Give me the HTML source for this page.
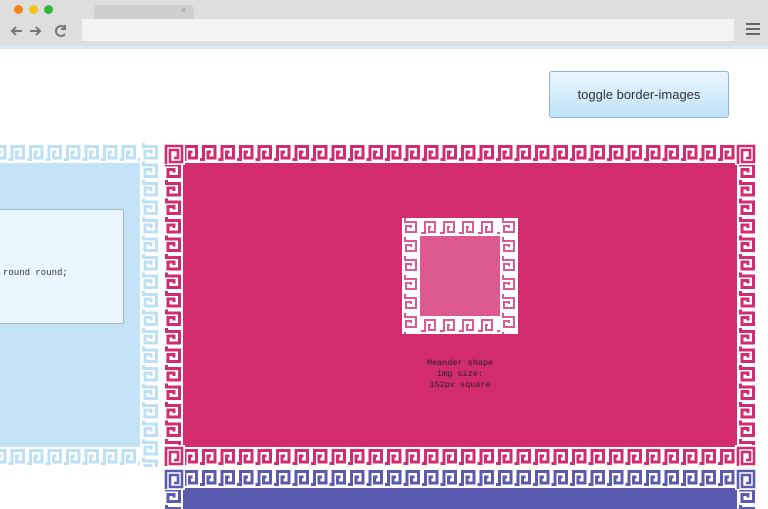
<!DOCTYPE html>
<html><head><style>
*{margin:0;padding:0;box-sizing:border-box}
body{width:768px;height:509px;overflow:hidden;background:#fff;position:relative;font-family:"Liberation Sans",sans-serif}
.abs{position:absolute}
</style></head><body>
<div class="abs" style="left:0;top:0;width:768px;height:46px;background:#dedede"></div>
<div class="abs" style="left:14px;top:5px;width:9px;height:9px;border-radius:50%;background:#f5821f"></div>
<div class="abs" style="left:29px;top:5px;width:9px;height:9px;border-radius:50%;background:#f6c31c"></div>
<div class="abs" style="left:44px;top:5px;width:9px;height:9px;border-radius:50%;background:#2fba3d"></div>
<div class="abs" style="left:94px;top:5px;width:100px;height:14px;background:#cfcfcf;border-radius:4px 4px 0 0"></div>
<div class="abs" style="left:181px;top:5px;font-size:9px;color:#888">×</div>
<svg class="abs" style="left:8px;top:22px" width="62" height="18" fill="none" stroke="#777" stroke-width="2">
<path d="M4,9 H14 M8,5 L4,9 L8,13"/>
<path d="M22,9 H32 M28,5 L32,9 L28,13"/>
<path d="M57,6 A5,5 0 1 0 57,12 M57,3 V7 H53"/>
</svg>
<div class="abs" style="left:82px;top:19px;width:652px;height:22px;background:#f3f3f3"></div>
<div class="abs" style="left:746px;top:23px;width:14px;height:2px;background:#666;box-shadow:0 5px 0 #666,0 10px 0 #666"></div>
<div class="abs" style="left:0;top:46px;width:768px;height:3px;background:#dde8f5"></div>

<div class="abs" style="left:549px;top:71px;width:180px;height:47px;border:1px solid #8fb7d2;border-radius:3px;background:linear-gradient(#eaf6fd,#bfe2f7);font-size:13px;color:#333;text-align:center;line-height:45px">toggle border-images</div>

<svg class="abs" style="left:0;top:0" width="768" height="509">
<defs>
<pattern id="mp" width="18.5" height="20" patternUnits="userSpaceOnUse">
<rect width="18.5" height="20" fill="#fff"/>
<path d="M0,16.5 H3.5 V3.5 H15 V15 H8 V9 H11" fill="none" stroke="#d22c6e" stroke-width="3"/>
</pattern>
<pattern id="mb" width="18.5" height="20" patternUnits="userSpaceOnUse">
<rect width="18.5" height="20" fill="#fff"/>
<path d="M0,16.5 H3.5 V3.5 H15 V15 H8 V9 H11" fill="none" stroke="#bde0f5" stroke-width="3"/>
</pattern>
<pattern id="mv" width="18.5" height="20" patternUnits="userSpaceOnUse">
<rect width="18.5" height="20" fill="#fff"/>
<path d="M0,16.5 H3.5 V3.5 H15 V15 H8 V9 H11" fill="none" stroke="#5a5aae" stroke-width="3"/>
</pattern>
<pattern id="mw" width="19" height="18" patternUnits="userSpaceOnUse">
<rect width="19" height="18" fill="#fff"/>
<path d="M0,15 H4 V4 H14 V14 H8 V9 H10" fill="none" stroke="#dc5a90" stroke-width="2"/>
</pattern>
<g id="corner"><rect width="22" height="22" fill="#fff" stroke="none"/><path d="M3,21 V3 H19 V19 H7 V7 H15 V15 H11" fill="none" stroke-width="2.6"/></g>
</defs>
<!-- blue box -->
<rect x="-10" y="163" width="150" height="284" fill="#c3e3f6"/>
<g transform="translate(-10,143)"><rect width="170" height="20" fill="url(#mb)"/></g>
<g transform="translate(-10,447)"><rect width="170" height="20" fill="url(#mb)"/></g>
<g transform="translate(160,143) rotate(90)"><rect width="324" height="20" fill="url(#mb)"/></g>
<!-- pink -->
<rect x="183" y="163" width="554" height="284" fill="#d22c6e"/>
<g transform="translate(163,143)"><rect width="594" height="20" fill="url(#mp)"/></g>
<g transform="translate(163,447)"><rect width="594" height="20" fill="url(#mp)"/></g>
<g transform="translate(183,143) rotate(90)"><rect width="324" height="20" fill="url(#mp)"/></g>
<g transform="translate(757,143) rotate(90)"><rect width="324" height="20" fill="url(#mp)"/></g>
<g stroke="#d22c6e">
<use href="#corner" x="163" y="143"/><use href="#corner" x="735" y="143"/>
<use href="#corner" x="163" y="445"/><use href="#corner" x="735" y="445"/>
</g>
<!-- purple -->
<rect x="183" y="488" width="554" height="40" fill="#5a5aae"/>
<g transform="translate(163,468)"><rect width="594" height="20" fill="url(#mv)"/></g>
<g transform="translate(183,468) rotate(90)"><rect width="60" height="20" fill="url(#mv)"/></g>
<g transform="translate(757,468) rotate(90)"><rect width="60" height="20" fill="url(#mv)"/></g>
<g stroke="#5a5aae"><use href="#corner" x="163" y="468"/><use href="#corner" x="735" y="468"/></g>
<!-- sample -->
<rect x="402" y="218" width="116" height="116" fill="#fff"/>
<g transform="translate(402,218)"><rect width="116" height="18" fill="url(#mw)"/></g>
<g transform="translate(402,316)"><rect width="116" height="18" fill="url(#mw)"/></g>
<g transform="translate(420,218) rotate(90)"><rect width="116" height="18" fill="url(#mw)"/></g>
<g transform="translate(518,218) rotate(90)"><rect width="116" height="18" fill="url(#mw)"/></g>
<rect x="420" y="236" width="80" height="80" fill="#dc5a90"/>
</svg>
<div class="abs" style="left:0;top:209px;width:124px;height:115px;background:#eaf6fd;border:1px solid #a9b8c2;border-left:none;font-family:'Liberation Mono',monospace;font-size:9px;color:#333;padding:58px 0 0 3px">round round;</div>
<div class="abs" style="left:400px;top:358px;width:120px;text-align:center;font-family:'Liberation Mono',monospace;font-size:8.5px;line-height:11px;color:#222">Meander shape<br>img size:<br>152px square</div>
</body></html>
